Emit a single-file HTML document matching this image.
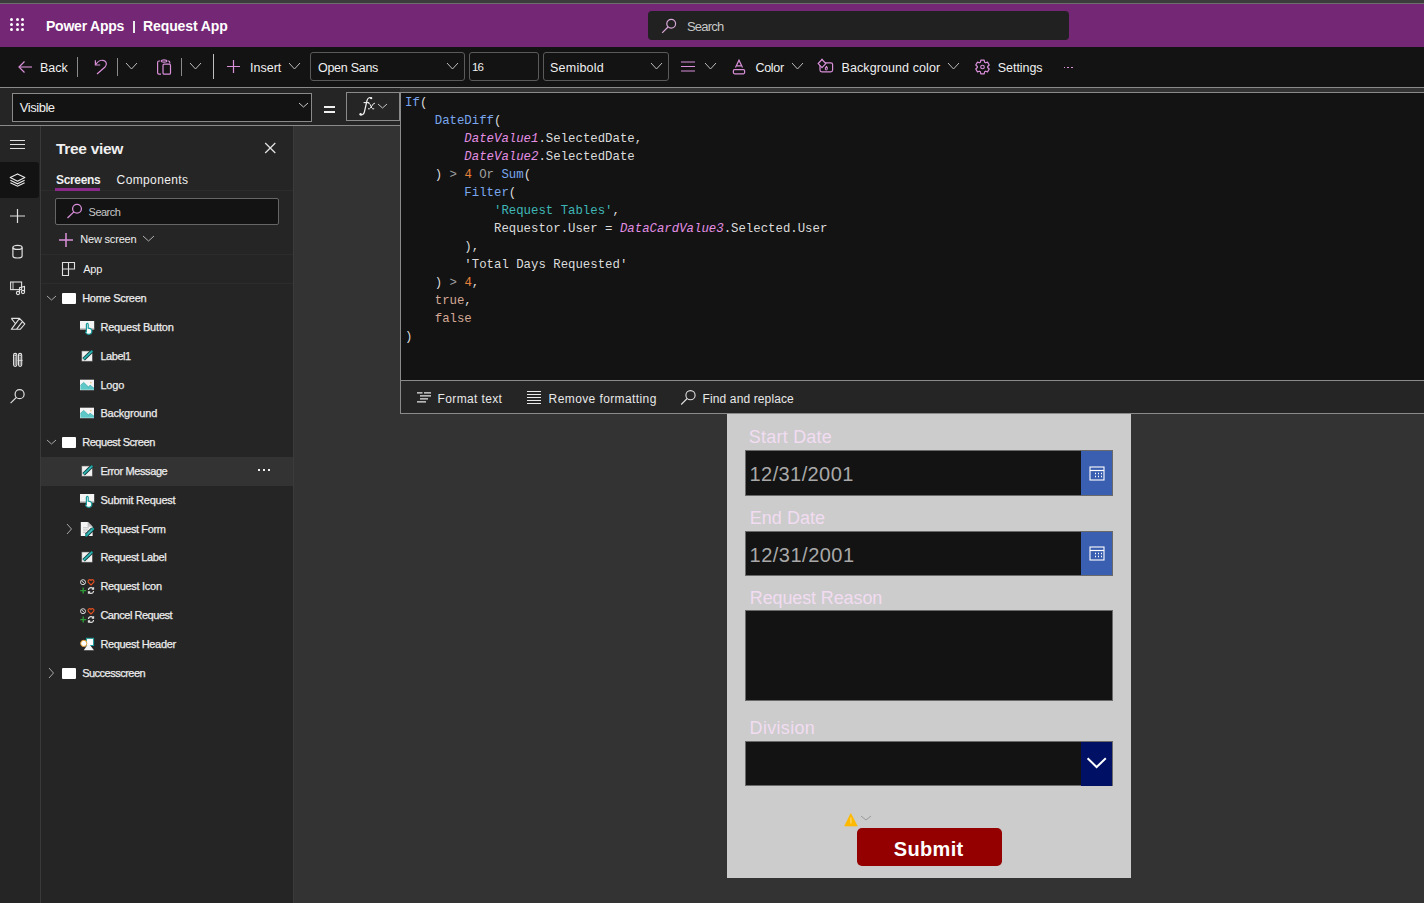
<!DOCTYPE html>
<html><head><meta charset="utf-8"><style>
html,body{margin:0;padding:0;width:1424px;height:903px;overflow:hidden;background:#333;}
.a{position:absolute;display:block;}
.t{position:absolute;white-space:pre;line-height:1;}
</style></head><body>
<div class="a" style="left:0px;top:0px;width:1424px;height:3px;background:#3c3c3c;"></div>
<div class="a" style="left:0px;top:3px;width:1424px;height:1px;background:#6b6e6b;"></div>
<div class="a" style="left:0px;top:4px;width:1424px;height:43px;background:#742774;"></div>
<div class="a" style="left:10.2px;top:17.8px;width:3px;height:3px;background:#ffffff;border-radius:1.5px;"></div>
<div class="a" style="left:10.2px;top:23.0px;width:3px;height:3px;background:#ffffff;border-radius:1.5px;"></div>
<div class="a" style="left:10.2px;top:28.200000000000003px;width:3px;height:3px;background:#ffffff;border-radius:1.5px;"></div>
<div class="a" style="left:15.6px;top:17.8px;width:3px;height:3px;background:#ffffff;border-radius:1.5px;"></div>
<div class="a" style="left:15.6px;top:23.0px;width:3px;height:3px;background:#ffffff;border-radius:1.5px;"></div>
<div class="a" style="left:15.6px;top:28.200000000000003px;width:3px;height:3px;background:#ffffff;border-radius:1.5px;"></div>
<div class="a" style="left:21.0px;top:17.8px;width:3px;height:3px;background:#ffffff;border-radius:1.5px;"></div>
<div class="a" style="left:21.0px;top:23.0px;width:3px;height:3px;background:#ffffff;border-radius:1.5px;"></div>
<div class="a" style="left:21.0px;top:28.200000000000003px;width:3px;height:3px;background:#ffffff;border-radius:1.5px;"></div>
<div class="t" id="t0" style="left:46.00px;top:19.16px;font-size:14px;color:#ffffff;font-weight:bold;font-family:'Liberation Sans', sans-serif;letter-spacing:-0.222px;">Power Apps</div>
<div class="a" style="left:133px;top:21px;width:2px;height:12px;background:#ececec;"></div>
<div class="t" id="t1" style="left:143.00px;top:19.16px;font-size:14px;color:#ffffff;font-weight:bold;font-family:'Liberation Sans', sans-serif;letter-spacing:-0.100px;">Request App</div>
<div class="a" style="left:648px;top:11px;width:421px;height:29px;background:#212121;border-radius:4px;"></div>
<svg class="a" style="left:660px;top:18px;" width="18" height="17" viewBox="0 0 18 17" fill="none"><circle cx="11.2" cy="5.8" r="4.4" stroke="#d8a8d8" stroke-width="1.2"/><line x1="8" y1="9" x2="2.2" y2="14.8" stroke="#d8a8d8" stroke-width="1.2"/></svg>
<div class="t" id="t2" style="left:687.00px;top:20.16px;font-size:13px;color:#c8c8c8;font-weight:normal;font-family:'Liberation Sans', sans-serif;letter-spacing:-0.800px;">Search</div>
<div class="a" style="left:0px;top:47px;width:1424px;height:40px;background:#131313;"></div>
<div class="a" style="left:0px;top:87px;width:1424px;height:1px;background:#8a8a8a;"></div>
<svg class="a" style="left:17px;top:60px;" width="16" height="14" viewBox="0 0 16 14" fill="none"><path d="M7.5 1.5 L2 7 L7.5 12.5" stroke="#d990d9" stroke-width="1.2"/><path d="M2.5 7 H15" stroke="#d990d9" stroke-width="1.3" opacity="0.85"/></svg>
<div class="t" id="t3" style="left:40.00px;top:62.15px;font-size:12.5px;color:#f0f0f0;font-weight:normal;font-family:'Liberation Sans', sans-serif;">Back</div>
<div class="a" style="left:77px;top:57px;width:1px;height:20px;background:#8a8a8a;"></div>
<svg class="a" style="left:93px;top:59px;" width="15" height="16" viewBox="0 0 15 16" fill="none"><path d="M2.4 1.2 V6 H7.2" stroke="#d990d9" stroke-width="1.2"/><path d="M2.6 5.8 C4.5 2.5 8 0.6 11 1.6 C13.8 2.6 14 5.8 12 8 L4 15" stroke="#d990d9" stroke-width="1.2"/></svg>
<div class="a" style="left:117px;top:58px;width:1px;height:18px;background:#8a8a8a;"></div>
<svg class="a" style="left:125px;top:62px;" width="13" height="9" viewBox="0 0 13 9" fill="none"><path d="M1 1 L6.5 7 L12 1" stroke="#bdbdbd" stroke-width="1.0"/></svg>
<svg class="a" style="left:156px;top:59px;" width="16" height="17" viewBox="0 0 16 17" fill="none"><rect x="7" y="5.2" width="7.5" height="10" rx="1.3" stroke="#d990d9" stroke-width="1.2"/><path d="M5 15.2 H3 Q1.6 15.2 1.6 13.8 V3.4 Q1.6 2 3 2 H4 M11.6 2 H12.4 Q13.8 2 13.8 3.4 V4.5" stroke="#d990d9" stroke-width="1.2"/><ellipse cx="8" cy="2" rx="2.8" ry="1.1" stroke="#d990d9" stroke-width="1.1"/></svg>
<div class="a" style="left:181px;top:58px;width:1px;height:18px;background:#8a8a8a;"></div>
<svg class="a" style="left:189px;top:62px;" width="13" height="9" viewBox="0 0 13 9" fill="none"><path d="M1 1 L6.5 7 L12 1" stroke="#bdbdbd" stroke-width="1.0"/></svg>
<div class="a" style="left:213px;top:54px;width:1px;height:25px;background:#c0c0c0;"></div>
<svg class="a" style="left:226px;top:59px;" width="15" height="15" viewBox="0 0 15 15" fill="none"><path d="M7.5 1 V14 M1 7.5 H14" stroke="#d990d9" stroke-width="1.2"/></svg>
<div class="t" id="t4" style="left:250.00px;top:62.15px;font-size:12.5px;color:#f0f0f0;font-weight:normal;font-family:'Liberation Sans', sans-serif;">Insert</div>
<svg class="a" style="left:288px;top:62px;" width="13" height="9" viewBox="0 0 13 9" fill="none"><path d="M1 1 L6.5 7 L12 1" stroke="#bdbdbd" stroke-width="1.0"/></svg>
<div class="a" style="left:310px;top:52px;width:155px;height:29px;background:#131313;border:1px solid #5a5a5a;box-sizing:border-box;border-radius:3px;"></div>
<div class="t" id="t5" style="left:318.00px;top:62.15px;font-size:12.5px;color:#f0f0f0;font-weight:normal;font-family:'Liberation Sans', sans-serif;letter-spacing:-0.275px;">Open Sans</div>
<svg class="a" style="left:446px;top:62px;" width="13" height="9" viewBox="0 0 13 9" fill="none"><path d="M1 1 L6.5 7 L12 1" stroke="#bdbdbd" stroke-width="1.0"/></svg>
<div class="a" style="left:469px;top:52px;width:70px;height:29px;background:#131313;border:1px solid #5a5a5a;box-sizing:border-box;border-radius:3px;"></div>
<div class="t" id="t6" style="left:472.00px;top:62.15px;font-size:11.5px;color:#f0f0f0;font-weight:normal;font-family:'Liberation Sans', sans-serif;letter-spacing:-1.000px;">16</div>
<div class="a" style="left:543px;top:52px;width:126px;height:29px;background:#131313;border:1px solid #5a5a5a;box-sizing:border-box;border-radius:3px;"></div>
<div class="t" id="t7" style="left:550.00px;top:62.15px;font-size:12.5px;color:#f0f0f0;font-weight:normal;font-family:'Liberation Sans', sans-serif;letter-spacing:0.229px;">Semibold</div>
<svg class="a" style="left:650px;top:62px;" width="13" height="9" viewBox="0 0 13 9" fill="none"><path d="M1 1 L6.5 7 L12 1" stroke="#bdbdbd" stroke-width="1.0"/></svg>
<svg class="a" style="left:680px;top:60px;" width="16" height="13" viewBox="0 0 16 13" fill="none"><path d="M1 2 H15 M1 6.5 H15 M1 11 H15" stroke="#d990d9" stroke-width="1.2"/></svg>
<svg class="a" style="left:704px;top:62px;" width="13" height="9" viewBox="0 0 13 9" fill="none"><path d="M1 1 L6.5 7 L12 1" stroke="#bdbdbd" stroke-width="1.0"/></svg>
<svg class="a" style="left:731px;top:58px;" width="16" height="17" viewBox="0 0 16 17" fill="none"><path d="M4.5 9.5 L8 2.2 L11.5 9.5 M6 7.8 H10" stroke="#d990d9" stroke-width="1.2"/><rect x="2.4" y="11.6" width="11.2" height="4.2" rx="1.2" stroke="#d990d9" stroke-width="1.2"/></svg>
<div class="t" id="t8" style="left:755.60px;top:62.15px;font-size:12.5px;color:#f0f0f0;font-weight:normal;font-family:'Liberation Sans', sans-serif;letter-spacing:-0.350px;">Color</div>
<svg class="a" style="left:791px;top:62px;" width="13" height="9" viewBox="0 0 13 9" fill="none"><path d="M1 1 L6.5 7 L12 1" stroke="#bdbdbd" stroke-width="1.0"/></svg>
<svg class="a" style="left:817px;top:58px;" width="18" height="16" viewBox="0 0 18 16" fill="none"><rect x="3" y="4.8" width="12.6" height="9" rx="1.8" stroke="#d990d9" stroke-width="1.2"/><path d="M5 1.5 L8.8 5.6 L5 9.6 L1.2 5.6 Z" stroke="#d990d9" stroke-width="1.2" fill="#131313"/><path d="M5 0.8 V2.5" stroke="#d990d9" stroke-width="1"/><path d="M9.5 8.5 Q11 10 10 11.5 Q9.2 12.6 8.4 11.5 Q7.8 10 9.5 8.5 Z" stroke="#d990d9" stroke-width="1.1"/></svg>
<div class="t" id="t9" style="left:841.60px;top:62.15px;font-size:12.5px;color:#f0f0f0;font-weight:normal;font-family:'Liberation Sans', sans-serif;letter-spacing:0.080px;">Background color</div>
<svg class="a" style="left:947px;top:62px;" width="13" height="9" viewBox="0 0 13 9" fill="none"><path d="M1 1 L6.5 7 L12 1" stroke="#bdbdbd" stroke-width="1.0"/></svg>
<svg class="a" style="left:973.5px;top:59px;" width="17" height="16" viewBox="0 0 17 16" fill="none"><path d="M6.81 1.21 L10.19 1.21 L10.62 3.25 L11.56 3.79 L13.54 3.14 L15.23 6.07 L13.67 7.46 L13.67 8.54 L15.23 9.93 L13.54 12.86 L11.56 12.21 L10.62 12.75 L10.19 14.79 L6.81 14.79 L6.38 12.75 L5.44 12.21 L3.46 12.86 L1.77 9.93 L3.33 8.54 L3.33 7.46 L1.77 6.07 L3.46 3.14 L5.44 3.79 L6.38 3.25 Z" stroke="#d990d9" stroke-width="1.2" stroke-linejoin="round"/><circle cx="8.5" cy="8" r="1.8" stroke="#d990d9" stroke-width="1.1"/></svg>
<div class="t" id="t10" style="left:997.80px;top:62.15px;font-size:12.5px;color:#f0f0f0;font-weight:normal;font-family:'Liberation Sans', sans-serif;letter-spacing:-0.057px;">Settings</div>
<div class="a" style="left:1063.5px;top:66.5px;width:1.6px;height:1.6px;background:#d990d9;"></div>
<div class="a" style="left:1067.3px;top:66.5px;width:1.6px;height:1.6px;background:#d990d9;"></div>
<div class="a" style="left:1071.1px;top:66.5px;width:1.6px;height:1.6px;background:#d990d9;"></div>
<div class="a" style="left:0px;top:88px;width:400px;height:37px;background:#252525;"></div>
<div class="a" style="left:0px;top:125px;width:400px;height:1px;background:#8a8a8a;"></div>
<div class="a" style="left:12px;top:93px;width:300px;height:29px;background:#131313;border:1px solid #8a8a8a;box-sizing:border-box;"></div>
<div class="t" id="t11" style="left:19.80px;top:101.16px;font-size:13px;color:#f0f0f0;font-weight:normal;font-family:'Liberation Sans', sans-serif;letter-spacing:-0.467px;">Visible</div>
<svg class="a" style="left:298px;top:102px;" width="11" height="7" viewBox="0 0 11 7" fill="none"><path d="M1 1 L5.5 5 L10 1" stroke="#c8c8c8" stroke-width="1.0"/></svg>
<div class="a" style="left:324px;top:106px;width:11px;height:1.5px;background:#f0f0f0;"></div>
<div class="a" style="left:324px;top:111px;width:11px;height:1.5px;background:#f0f0f0;"></div>
<div class="a" style="left:346px;top:92px;width:54px;height:29px;background:#252525;border:1px solid #8a8a8a;box-sizing:border-box;"></div>
<svg class="a" style="left:356px;top:95px;" width="22" height="22" viewBox="0 0 22 22" fill="none"><path d="M15.5 3.4 C14.2 1.8 11.8 2.4 11 5.5 L8.4 17 C7.8 19.6 6 20.4 4.2 19.4" stroke="#f0f0f0" stroke-width="1.2"/><circle cx="15.2" cy="3.2" r="1.1" fill="#f0f0f0"/><circle cx="4.6" cy="19.2" r="1.2" fill="#f0f0f0"/><path d="M7.6 7.6 H13.2" stroke="#f0f0f0" stroke-width="1.1"/><path d="M12.2 8.2 Q13.4 7.9 14 9.2 L15.8 13 Q16.4 14.2 18.2 13.8 M19 8.4 Q18 7.9 17.2 9 L14.4 13 Q13.6 14.2 12 13.8" stroke="#f0f0f0" stroke-width="1"/></svg>
<svg class="a" style="left:377px;top:103px;" width="11" height="7" viewBox="0 0 11 7" fill="none"><path d="M1 1 L5.5 5 L10 1" stroke="#c8c8c8" stroke-width="1.0"/></svg>
<div class="a" style="left:400px;top:92px;width:1025px;height:322px;background:#131313;border:1px solid #8a8a8a;box-sizing:border-box;"></div>
<div class="a" style="left:401px;top:380px;width:1023px;height:1px;background:#8a8a8a;"></div>
<div class="a" style="left:401px;top:381px;width:1023px;height:32px;background:#252525;"></div>
<div class="t" id="t12" style="left:405.10px;top:97.16px;font-size:12.35px;color:#dcdcdc;font-weight:normal;font-family:'Liberation Mono', monospace;"><span style="color:#7aa6ee;">If</span><span style="color:#dcdcdc;">(</span></div>
<div class="t" id="t13" style="left:405.10px;top:115.16px;font-size:12.35px;color:#dcdcdc;font-weight:normal;font-family:'Liberation Mono', monospace;"><span style="color:#7aa6ee;">    DateDiff</span><span style="color:#dcdcdc;">(</span></div>
<div class="t" id="t14" style="left:405.10px;top:133.16px;font-size:12.35px;color:#dcdcdc;font-weight:normal;font-family:'Liberation Mono', monospace;"><span style="color:#dcdcdc;">        </span><span style="color:#e48fe4;font-style:italic;">DateValue1</span><span style="color:#dcdcdc;">.SelectedDate,</span></div>
<div class="t" id="t15" style="left:405.10px;top:151.16px;font-size:12.35px;color:#dcdcdc;font-weight:normal;font-family:'Liberation Mono', monospace;"><span style="color:#dcdcdc;">        </span><span style="color:#e48fe4;font-style:italic;">DateValue2</span><span style="color:#dcdcdc;">.SelectedDate</span></div>
<div class="t" id="t16" style="left:405.10px;top:169.16px;font-size:12.35px;color:#dcdcdc;font-weight:normal;font-family:'Liberation Mono', monospace;"><span style="color:#dcdcdc;">    )</span><span style="color:#a0a0a0;"> &gt; </span><span style="color:#e8823a;">4</span><span style="color:#a0a0a0;"> Or </span><span style="color:#7aa6ee;">Sum</span><span style="color:#dcdcdc;">(</span></div>
<div class="t" id="t17" style="left:405.10px;top:187.16px;font-size:12.35px;color:#dcdcdc;font-weight:normal;font-family:'Liberation Mono', monospace;"><span style="color:#7aa6ee;">        Filter</span><span style="color:#dcdcdc;">(</span></div>
<div class="t" id="t18" style="left:405.10px;top:205.16px;font-size:12.35px;color:#dcdcdc;font-weight:normal;font-family:'Liberation Mono', monospace;"><span style="color:#dcdcdc;">            </span><span style="color:#3fb6b6;">'Request Tables'</span><span style="color:#dcdcdc;">,</span></div>
<div class="t" id="t19" style="left:405.10px;top:223.16px;font-size:12.35px;color:#dcdcdc;font-weight:normal;font-family:'Liberation Mono', monospace;"><span style="color:#dcdcdc;">            Requestor.User = </span><span style="color:#e48fe4;font-style:italic;">DataCardValue3</span><span style="color:#dcdcdc;">.Selected.User</span></div>
<div class="t" id="t20" style="left:405.10px;top:241.16px;font-size:12.35px;color:#dcdcdc;font-weight:normal;font-family:'Liberation Mono', monospace;"><span style="color:#dcdcdc;">        ),</span></div>
<div class="t" id="t21" style="left:405.10px;top:259.16px;font-size:12.35px;color:#dcdcdc;font-weight:normal;font-family:'Liberation Mono', monospace;"><span style="color:#dcdcdc;">        'Total Days Requested'</span></div>
<div class="t" id="t22" style="left:405.10px;top:277.16px;font-size:12.35px;color:#dcdcdc;font-weight:normal;font-family:'Liberation Mono', monospace;"><span style="color:#dcdcdc;">    )</span><span style="color:#a0a0a0;"> &gt; </span><span style="color:#e8823a;">4</span><span style="color:#dcdcdc;">,</span></div>
<div class="t" id="t23" style="left:405.10px;top:295.16px;font-size:12.35px;color:#dcdcdc;font-weight:normal;font-family:'Liberation Mono', monospace;"><span style="color:#d4a894;">    true</span><span style="color:#dcdcdc;">,</span></div>
<div class="t" id="t24" style="left:405.10px;top:313.16px;font-size:12.35px;color:#dcdcdc;font-weight:normal;font-family:'Liberation Mono', monospace;"><span style="color:#d4a894;">    false</span></div>
<div class="t" id="t25" style="left:405.10px;top:331.16px;font-size:12.35px;color:#dcdcdc;font-weight:normal;font-family:'Liberation Mono', monospace;"><span style="color:#dcdcdc;">)</span></div>
<svg class="a" style="left:416px;top:391px;" width="16" height="13" viewBox="0 0 16 13" fill="none"><path d="M1 1.8 H6.5 M8 1.8 H15 M4 4.8 H15 M4 7.8 H12 M1 10.8 H10" stroke="#e8e8e8" stroke-width="1.2"/></svg>
<div class="t" id="t26" style="left:437.60px;top:393.15px;font-size:12px;color:#e8e8e8;font-weight:normal;font-family:'Liberation Sans', sans-serif;letter-spacing:0.360px;">Format text</div>
<svg class="a" style="left:526px;top:390px;" width="16" height="15" viewBox="0 0 16 15" fill="none"><path d="M1 1.5 H15 M1 4.5 H15 M1 7.5 H15 M1 10.5 H15 M1 13.5 H15" stroke="#e8e8e8" stroke-width="1.1"/></svg>
<div class="t" id="t27" style="left:548.60px;top:393.15px;font-size:12px;color:#e8e8e8;font-weight:normal;font-family:'Liberation Sans', sans-serif;letter-spacing:0.400px;">Remove formatting</div>
<svg class="a" style="left:680px;top:389px;" width="17" height="17" viewBox="0 0 17 17" fill="none"><circle cx="10.5" cy="6.2" r="4.6" stroke="#e0e0e0" stroke-width="1.1"/><line x1="7.2" y1="9.5" x2="1.2" y2="15.5" stroke="#e0e0e0" stroke-width="1.1"/></svg>
<div class="t" id="t28" style="left:702.60px;top:393.15px;font-size:12px;color:#e8e8e8;font-weight:normal;font-family:'Liberation Sans', sans-serif;letter-spacing:0.120px;">Find and replace</div>
<div class="a" style="left:0px;top:126px;width:40px;height:777px;background:#252525;"></div>
<div class="a" style="left:40px;top:126px;width:1px;height:777px;background:#3a3a3a;"></div>
<div class="a" style="left:41px;top:126px;width:252px;height:777px;background:#252525;"></div>
<div class="a" style="left:293px;top:126px;width:1px;height:777px;background:#3b3b3b;"></div>
<div class="a" style="left:294px;top:126px;width:106px;height:287px;background:#333333;"></div>
<div class="a" style="left:294px;top:414px;width:1130px;height:489px;background:#333333;"></div>
<svg class="a" style="left:9px;top:139px;" width="17" height="11" viewBox="0 0 17 11" fill="none"><path d="M1 1.5 H16 M1 5.5 H16 M1 9.5 H16" stroke="#e0e0e0" stroke-width="1.1"/></svg>
<div class="a" style="left:0px;top:162px;width:38.5px;height:36px;background:#131313;border-radius:0 3px 3px 0;"></div>
<svg class="a" style="left:9px;top:171px;" width="17" height="17" viewBox="0 0 17 17" fill="none"><path d="M8.5 2.9 L15.8 6.6 L8.5 10.2 L1.2 6.6 Z" stroke="#ececec" stroke-width="1.1" stroke-linejoin="round"/><path d="M1.4 9.2 L8.5 12.8 L15.6 9.2 M1.4 11.8 L8.5 15.2 L15.6 11.8" stroke="#ececec" stroke-width="1.1"/></svg>
<svg class="a" style="left:9px;top:208px;" width="17" height="16" viewBox="0 0 17 16" fill="none"><path d="M8.5 1 V15 M1 8 H16" stroke="#e0e0e0" stroke-width="1.2"/></svg>
<svg class="a" style="left:11px;top:244px;" width="13" height="16" viewBox="0 0 13 16" fill="none"><ellipse cx="6.5" cy="3.4" rx="4.6" ry="2" stroke="#e0e0e0" stroke-width="1.2"/><path d="M1.9 3.4 V12 A4.6 2 0 0 0 11.1 12 V3.4" stroke="#e0e0e0" stroke-width="1.2"/></svg>
<svg class="a" style="left:9px;top:280px;" width="18" height="16" viewBox="0 0 18 16" fill="none"><rect x="1.6" y="2" width="11" height="7.6" stroke="#e0e0e0" stroke-width="1.1"/><path d="M4 2 V9.6" stroke="#e0e0e0" stroke-width="0.9"/><path d="M10.5 13 V7.8 L15.5 6.5 V12" stroke="#e0e0e0" stroke-width="1.1"/><circle cx="9" cy="13" r="1.6" stroke="#e0e0e0" stroke-width="1.1"/><circle cx="14" cy="12" r="1.6" stroke="#e0e0e0" stroke-width="1.1"/></svg>
<svg class="a" style="left:10px;top:316px;" width="16" height="16" viewBox="0 0 16 16" fill="none"><path d="M1.3 2.4 H9.5 L14.8 8 L10.2 13.3 H1.3 L9.5 2.4 M1.3 2.4 L5.3 7.5 M6.4 13.3 L12.4 5.6" stroke="#e0e0e0" stroke-width="1.1" stroke-linejoin="round"/></svg>
<svg class="a" style="left:12px;top:352px;" width="12" height="16" viewBox="0 0 12 16" fill="none"><rect x="1.6" y="1.4" width="3.2" height="13" rx="1.6" stroke="#e6e6e6" stroke-width="1.1"/><rect x="6.5" y="1.4" width="3.2" height="13" rx="1.6" stroke="#e6e6e6" stroke-width="1.1"/><circle cx="3.2" cy="3.4" r="0.8" fill="#e6e6e6"/><circle cx="8.1" cy="3.4" r="0.8" fill="#e6e6e6"/><path d="M3.2 4.5 V13 M8.1 4.5 V13 M5.6 8.4 H10.6" stroke="#e6e6e6" stroke-width="0.8"/></svg>
<svg class="a" style="left:9px;top:388px;" width="17" height="17" viewBox="0 0 17 17" fill="none"><circle cx="10.6" cy="6.2" r="4.5" stroke="#e0e0e0" stroke-width="1.2"/><line x1="7.4" y1="9.4" x2="1.6" y2="15.2" stroke="#e0e0e0" stroke-width="1.2"/></svg>
<div class="t" id="t29" style="left:56.00px;top:141.16px;font-size:15.5px;color:#f0f0f0;font-weight:bold;font-family:'Liberation Sans', sans-serif;letter-spacing:-0.300px;">Tree view</div>
<svg class="a" style="left:264px;top:142px;" width="13" height="12" viewBox="0 0 13 12" fill="none"><path d="M1.2 1 L11.3 11 M11.3 1 L1.2 11" stroke="#e0e0e0" stroke-width="1.3"/></svg>
<div class="t" id="t30" style="left:56.00px;top:174.15px;font-size:12px;color:#f0f0f0;font-weight:bold;font-family:'Liberation Sans', sans-serif;letter-spacing:-0.333px;">Screens</div>
<div class="t" id="t31" style="left:116.60px;top:174.15px;font-size:12px;color:#f0f0f0;font-weight:normal;font-family:'Liberation Sans', sans-serif;letter-spacing:0.378px;">Components</div>
<div class="a" style="left:41px;top:190px;width:252px;height:1px;background:#2c2c2c;"></div>
<div class="a" style="left:55px;top:188px;width:45px;height:2.5px;background:#8a2a8a;"></div>
<div class="a" style="left:55px;top:198px;width:224px;height:27px;background:#131313;border:1px solid #666;box-sizing:border-box;border-radius:2px;"></div>
<svg class="a" style="left:66px;top:203px;" width="17" height="16" viewBox="0 0 17 16" fill="none"><circle cx="11" cy="5.8" r="4.4" stroke="#d990d9" stroke-width="1.3"/><line x1="7.9" y1="8.9" x2="1.5" y2="15" stroke="#d990d9" stroke-width="1.3"/></svg>
<div class="t" id="t32" style="left:88.60px;top:207.15px;font-size:11px;color:#c8c8c8;font-weight:normal;font-family:'Liberation Sans', sans-serif;letter-spacing:-0.520px;">Search</div>
<svg class="a" style="left:58px;top:232px;" width="16" height="16" viewBox="0 0 16 16" fill="none"><path d="M8 1 V15 M1 8 H15" stroke="#d990d9" stroke-width="1.5"/></svg>
<div class="t" id="t33" style="left:80.20px;top:234.15px;font-size:11px;color:#f0f0f0;font-weight:normal;font-family:'Liberation Sans', sans-serif;letter-spacing:-0.178px;">New screen</div>
<svg class="a" style="left:142px;top:235px;" width="13" height="8" viewBox="0 0 13 8" fill="none"><path d="M1 1 L6.5 6 L12 1" stroke="#b0b0b0" stroke-width="1.0"/></svg>
<div class="a" style="left:41px;top:254px;width:252px;height:1px;background:#2c2c2c;"></div>
<svg class="a" style="left:61px;top:261px;" width="15" height="16" viewBox="0 0 15 16" fill="none"><path d="M1.5 1.5 H13.5 V8 H7.5 V14.5 H1.5 Z M7.5 1.5 V8 M1.5 8 H7.5" stroke="#e0e0e0" stroke-width="1.1"/></svg>
<div class="t" id="t34" style="left:83.20px;top:264.15px;font-size:11px;color:#f0f0f0;font-weight:normal;font-family:'Liberation Sans', sans-serif;letter-spacing:-0.200px;">App</div>
<div class="a" style="left:41px;top:283px;width:252px;height:1px;background:#2c2c2c;"></div>
<div class="a" style="left:41px;top:457px;width:252px;height:29px;background:#333333;"></div>
<div class="a" style="left:257.6px;top:469px;width:2px;height:2px;background:#f0f0f0;"></div>
<div class="a" style="left:263.0px;top:469px;width:2px;height:2px;background:#f0f0f0;"></div>
<div class="a" style="left:268.40000000000003px;top:469px;width:2px;height:2px;background:#f0f0f0;"></div>
<svg class="a" style="left:46px;top:295px;" width="11" height="7" viewBox="0 0 11 7" fill="none"><path d="M1 1 L5.5 5 L10 1" stroke="#a8a8a8" stroke-width="1.0"/></svg>
<div class="a" style="left:62px;top:293px;width:14px;height:11px;background:#ffffff;border-radius:1px;"></div>
<div class="t" id="t35" style="left:82.20px;top:293.15px;font-size:11px;color:#ececec;font-weight:normal;font-family:'Liberation Sans', sans-serif;letter-spacing:-0.280px;-webkit-text-stroke:0.25px #ececec;">Home Screen</div>
<svg class="a" style="left:80px;top:320px;" width="16" height="16" viewBox="0 0 16 16" fill="none"><rect x="0" y="1" width="14.2" height="8.4" fill="#f4f4f4"/><rect x="0" y="8.4" width="14.2" height="1.2" fill="#a8a8a8"/><path d="M6.4 11.5 V4.2 Q7.3 2.6 8.2 4.2 V8.2 Q11.6 8.4 11.9 10.8 Q11.9 14.3 9 14.3 Q6.3 14.3 5.6 12.4 Z" fill="#ffffff" stroke="#1a9a9a" stroke-width="1.2" stroke-linejoin="round"/></svg>
<div class="t" id="t36" style="left:100.40px;top:322.15px;font-size:11px;color:#ececec;font-weight:normal;font-family:'Liberation Sans', sans-serif;letter-spacing:-0.185px;-webkit-text-stroke:0.25px #ececec;">Request Button</div>
<svg class="a" style="left:81px;top:350px;" width="13" height="13" viewBox="0 0 13 13" fill="none"><rect x="0.8" y="1" width="10.5" height="10.2" fill="#f2f2f2" stroke="#5a5a5a" stroke-width="0.6"/><path d="M2.6 9.2 L11.4 0.8" stroke="#202020" stroke-width="3.6"/><path d="M2.6 9.2 L11.4 0.8" stroke="#169a9a" stroke-width="2.4"/><path d="M3.4 8.4 L10.6 1.6" stroke="#c8f0f0" stroke-width="0.6" stroke-dasharray="0.8 0.8"/></svg>
<div class="t" id="t37" style="left:100.40px;top:351.15px;font-size:11px;color:#ececec;font-weight:normal;font-family:'Liberation Sans', sans-serif;letter-spacing:-0.440px;-webkit-text-stroke:0.25px #ececec;">Label1</div>
<svg class="a" style="left:80px;top:379px;" width="15" height="12" viewBox="0 0 15 12" fill="none"><rect x="0" y="0.7" width="14" height="10.5" fill="#f4f4f4"/><path d="M0.4 10.8 V6.4 L3.7 3.4 L8.6 8 L10 6.2 L14 9.2 V10.8 Z" fill="#5ec8c8"/><path d="M0.4 6.4 L3.7 3.4 L9 8.6 M8.6 8 L10 6.2 L14 9.2" stroke="#3aa8a8" stroke-width="0.7"/><circle cx="10.8" cy="3.6" r="0.9" fill="#f8c890"/></svg>
<div class="t" id="t38" style="left:100.40px;top:380.15px;font-size:11px;color:#ececec;font-weight:normal;font-family:'Liberation Sans', sans-serif;letter-spacing:-0.200px;-webkit-text-stroke:0.25px #ececec;">Logo</div>
<svg class="a" style="left:80px;top:407px;" width="15" height="12" viewBox="0 0 15 12" fill="none"><rect x="0" y="0.7" width="14" height="10.5" fill="#f4f4f4"/><path d="M0.4 10.8 V6.4 L3.7 3.4 L8.6 8 L10 6.2 L14 9.2 V10.8 Z" fill="#5ec8c8"/><path d="M0.4 6.4 L3.7 3.4 L9 8.6 M8.6 8 L10 6.2 L14 9.2" stroke="#3aa8a8" stroke-width="0.7"/><circle cx="10.8" cy="3.6" r="0.9" fill="#f8c890"/></svg>
<div class="t" id="t39" style="left:100.40px;top:408.15px;font-size:11px;color:#ececec;font-weight:normal;font-family:'Liberation Sans', sans-serif;letter-spacing:-0.200px;-webkit-text-stroke:0.25px #ececec;">Background</div>
<svg class="a" style="left:46px;top:439px;" width="11" height="7" viewBox="0 0 11 7" fill="none"><path d="M1 1 L5.5 5 L10 1" stroke="#a8a8a8" stroke-width="1.0"/></svg>
<div class="a" style="left:62px;top:437px;width:14px;height:11px;background:#ffffff;border-radius:1px;"></div>
<div class="t" id="t40" style="left:82.20px;top:437.15px;font-size:11px;color:#ececec;font-weight:normal;font-family:'Liberation Sans', sans-serif;letter-spacing:-0.446px;-webkit-text-stroke:0.25px #ececec;">Request Screen</div>
<svg class="a" style="left:81px;top:465px;" width="13" height="13" viewBox="0 0 13 13" fill="none"><rect x="0.8" y="1" width="10.5" height="10.2" fill="#f2f2f2" stroke="#5a5a5a" stroke-width="0.6"/><path d="M2.6 9.2 L11.4 0.8" stroke="#202020" stroke-width="3.6"/><path d="M2.6 9.2 L11.4 0.8" stroke="#169a9a" stroke-width="2.4"/><path d="M3.4 8.4 L10.6 1.6" stroke="#c8f0f0" stroke-width="0.6" stroke-dasharray="0.8 0.8"/></svg>
<div class="t" id="t41" style="left:100.40px;top:466.15px;font-size:11px;color:#ececec;font-weight:normal;font-family:'Liberation Sans', sans-serif;letter-spacing:-0.400px;-webkit-text-stroke:0.25px #ececec;">Error Message</div>
<svg class="a" style="left:80px;top:493px;" width="16" height="16" viewBox="0 0 16 16" fill="none"><rect x="0" y="1" width="14.2" height="8.4" fill="#f4f4f4"/><rect x="0" y="8.4" width="14.2" height="1.2" fill="#a8a8a8"/><path d="M6.4 11.5 V4.2 Q7.3 2.6 8.2 4.2 V8.2 Q11.6 8.4 11.9 10.8 Q11.9 14.3 9 14.3 Q6.3 14.3 5.6 12.4 Z" fill="#ffffff" stroke="#1a9a9a" stroke-width="1.2" stroke-linejoin="round"/></svg>
<div class="t" id="t42" style="left:100.40px;top:495.15px;font-size:11px;color:#ececec;font-weight:normal;font-family:'Liberation Sans', sans-serif;letter-spacing:-0.231px;-webkit-text-stroke:0.25px #ececec;">Submit Request</div>
<svg class="a" style="left:66px;top:523px;" width="7" height="12" viewBox="0 0 7 12" fill="none"><path d="M1 1 L5.5 6 L1 11" stroke="#a8a8a8" stroke-width="1"/></svg>
<svg class="a" style="left:80px;top:522px;" width="16" height="16" viewBox="0 0 16 16" fill="none"><path d="M0.8 -0.3 H7.6 L12.6 4.7 V14.1 H0.8 Z" fill="#f6f6f6"/><path d="M7.6 -0.3 V4.7 H12.6 Z" fill="#c0c0c0"/><path d="M3 5.8 H9 M3 8 H8 M3 10.2 H6" stroke="#b0b0b0" stroke-width="0.8"/><path d="M6.4 13.2 L12.8 7" stroke="#202020" stroke-width="4"/><path d="M6.4 13.2 L12.8 7" stroke="#1a9c9c" stroke-width="2.8" stroke-linecap="round"/><path d="M7.4 12.2 L12 7.8" stroke="#90e0e0" stroke-width="0.7"/></svg>
<div class="t" id="t43" style="left:100.40px;top:524.15px;font-size:11px;color:#ececec;font-weight:normal;font-family:'Liberation Sans', sans-serif;letter-spacing:-0.382px;-webkit-text-stroke:0.25px #ececec;">Request Form</div>
<svg class="a" style="left:81px;top:551px;" width="13" height="13" viewBox="0 0 13 13" fill="none"><rect x="0.8" y="1" width="10.5" height="10.2" fill="#f2f2f2" stroke="#5a5a5a" stroke-width="0.6"/><path d="M2.6 9.2 L11.4 0.8" stroke="#202020" stroke-width="3.6"/><path d="M2.6 9.2 L11.4 0.8" stroke="#169a9a" stroke-width="2.4"/><path d="M3.4 8.4 L10.6 1.6" stroke="#c8f0f0" stroke-width="0.6" stroke-dasharray="0.8 0.8"/></svg>
<div class="t" id="t44" style="left:100.40px;top:552.15px;font-size:11px;color:#ececec;font-weight:normal;font-family:'Liberation Sans', sans-serif;letter-spacing:-0.383px;-webkit-text-stroke:0.25px #ececec;">Request Label</div>
<svg class="a" style="left:80px;top:579px;" width="15" height="16" viewBox="0 0 15 16" fill="none"><circle cx="3" cy="3.2" r="2.5" stroke="#d4d4d4" stroke-width="1"/><path d="M1.4 1.6 L4.6 4.8" stroke="#d4d4d4" stroke-width="1"/><path d="M11 6 L8.4 3.4 Q7.6 2 8.8 0.9 Q10 0.2 11 1.4 Q12 0.2 13.2 0.9 Q14.4 2 13.6 3.4 Z" stroke="#e8501e" stroke-width="1.1" stroke-linejoin="round"/><path d="M3.2 8.6 V14.6 M0.2 11.6 H6.2" stroke="#2e9a38" stroke-width="1.4"/><path d="M8.4 11 Q8.8 8.6 11 8.6 Q12.4 8.6 13.2 9.6 M13.6 8.2 V10.2 H11.8 M13.6 12 Q13.2 14.4 11 14.4 Q9.6 14.4 8.8 13.4 M8.4 14.8 V12.8 H10.2" stroke="#e0e0e0" stroke-width="1.1"/></svg>
<div class="t" id="t45" style="left:100.40px;top:581.15px;font-size:11px;color:#ececec;font-weight:normal;font-family:'Liberation Sans', sans-serif;letter-spacing:-0.291px;-webkit-text-stroke:0.25px #ececec;">Request Icon</div>
<svg class="a" style="left:80px;top:608px;" width="15" height="16" viewBox="0 0 15 16" fill="none"><circle cx="3" cy="3.2" r="2.5" stroke="#d4d4d4" stroke-width="1"/><path d="M1.4 1.6 L4.6 4.8" stroke="#d4d4d4" stroke-width="1"/><path d="M11 6 L8.4 3.4 Q7.6 2 8.8 0.9 Q10 0.2 11 1.4 Q12 0.2 13.2 0.9 Q14.4 2 13.6 3.4 Z" stroke="#e8501e" stroke-width="1.1" stroke-linejoin="round"/><path d="M3.2 8.6 V14.6 M0.2 11.6 H6.2" stroke="#2e9a38" stroke-width="1.4"/><path d="M8.4 11 Q8.8 8.6 11 8.6 Q12.4 8.6 13.2 9.6 M13.6 8.2 V10.2 H11.8 M13.6 12 Q13.2 14.4 11 14.4 Q9.6 14.4 8.8 13.4 M8.4 14.8 V12.8 H10.2" stroke="#e0e0e0" stroke-width="1.1"/></svg>
<div class="t" id="t46" style="left:100.40px;top:610.15px;font-size:11px;color:#ececec;font-weight:normal;font-family:'Liberation Sans', sans-serif;letter-spacing:-0.462px;-webkit-text-stroke:0.25px #ececec;">Cancel Request</div>
<svg class="a" style="left:80px;top:637px;" width="16" height="16" viewBox="0 0 16 16" fill="none"><rect x="6.4" y="1.3" width="7.2" height="7.2" fill="#ffffff" stroke="#1a9a9a" stroke-width="1"/><path d="M3.8 13.3 L8.6 6.2 L14 13.3 Z" fill="#f4f4f4"/><circle cx="3.8" cy="6.4" r="3.1" fill="#ffffff" stroke="#e8a030" stroke-width="1"/></svg>
<div class="t" id="t47" style="left:100.40px;top:639.15px;font-size:11px;color:#ececec;font-weight:normal;font-family:'Liberation Sans', sans-serif;letter-spacing:-0.338px;-webkit-text-stroke:0.25px #ececec;">Request Header</div>
<svg class="a" style="left:48px;top:667px;" width="7" height="12" viewBox="0 0 7 12" fill="none"><path d="M1 1 L5.5 6 L1 11" stroke="#a8a8a8" stroke-width="1"/></svg>
<div class="a" style="left:62px;top:668px;width:14px;height:11px;background:#ffffff;border-radius:1px;"></div>
<div class="t" id="t48" style="left:82.20px;top:668.15px;font-size:11px;color:#ececec;font-weight:normal;font-family:'Liberation Sans', sans-serif;letter-spacing:-0.509px;-webkit-text-stroke:0.25px #ececec;">Successcreen</div>
<div class="a" style="left:727px;top:414px;width:404px;height:464px;background:#cccccc;"></div>
<div class="t" id="t49" style="left:748.80px;top:428.15px;font-size:18px;color:#f2dcf2;font-weight:normal;font-family:'Liberation Sans', sans-serif;letter-spacing:0.222px;">Start Date</div>
<div class="a" style="left:745px;top:450px;width:368px;height:46px;background:#131313;border:1px solid #6a6a6a;box-sizing:border-box;"></div>
<div class="a" style="left:1081px;top:451px;width:31px;height:44px;background:#3a5eb0;"></div>
<div class="t" id="t50" style="left:749.60px;top:464.16px;font-size:20px;color:#a8a8a8;font-weight:normal;font-family:'Liberation Sans', sans-serif;letter-spacing:0.400px;">12/31/2001</div>
<svg class="a" style="left:1088.5px;top:466px;" width="16" height="15" viewBox="0 0 16 15" fill="none"><rect x="1" y="1" width="14" height="13" stroke="#fff" stroke-width="1.1"/><path d="M1 4.5 H15" stroke="#fff" stroke-width="1.2"/><path d="M6 7.5 H7 M9 7.5 H10 M12 7.5 H13 M6 10.5 H7 M9 10.5 H10 M12 10.5 H13" stroke="#fff" stroke-width="1.3"/></svg>
<div class="t" id="t51" style="left:749.80px;top:509.15px;font-size:18px;color:#f2dcf2;font-weight:normal;font-family:'Liberation Sans', sans-serif;letter-spacing:0.029px;">End Date</div>
<div class="a" style="left:745px;top:531px;width:368px;height:45px;background:#131313;border:1px solid #6a6a6a;box-sizing:border-box;"></div>
<div class="a" style="left:1081px;top:532px;width:31px;height:43px;background:#3a5eb0;"></div>
<div class="t" id="t52" style="left:749.60px;top:545.16px;font-size:20px;color:#a8a8a8;font-weight:normal;font-family:'Liberation Sans', sans-serif;letter-spacing:0.489px;">12/31/2001</div>
<svg class="a" style="left:1088.5px;top:546px;" width="16" height="15" viewBox="0 0 16 15" fill="none"><rect x="1" y="1" width="14" height="13" stroke="#fff" stroke-width="1.1"/><path d="M1 4.5 H15" stroke="#fff" stroke-width="1.2"/><path d="M6 7.5 H7 M9 7.5 H10 M12 7.5 H13 M6 10.5 H7 M9 10.5 H10 M12 10.5 H13" stroke="#fff" stroke-width="1.3"/></svg>
<div class="t" id="t53" style="left:749.80px;top:589.15px;font-size:18px;color:#f2dcf2;font-weight:normal;font-family:'Liberation Sans', sans-serif;letter-spacing:-0.123px;">Request Reason</div>
<div class="a" style="left:745px;top:610px;width:368px;height:91px;background:#131313;border:1px solid #6a6a6a;box-sizing:border-box;"></div>
<div class="t" id="t54" style="left:749.60px;top:719.15px;font-size:18px;color:#f2dcf2;font-weight:normal;font-family:'Liberation Sans', sans-serif;letter-spacing:0.314px;">Division</div>
<div class="a" style="left:745px;top:741px;width:368px;height:45px;background:#131313;border:1px solid #6a6a6a;box-sizing:border-box;"></div>
<div class="a" style="left:1081px;top:741.5px;width:31px;height:44px;background:#001064;"></div>
<svg class="a" style="left:1085px;top:754px;" width="24" height="17" viewBox="0 0 24 17" fill="none"><path d="M2.6 4.3 L11.6 13 L20.8 4.3" stroke="#fff" stroke-width="2"/></svg>
<svg class="a" style="left:843px;top:812px;" width="16" height="16" viewBox="0 0 16 16" fill="none"><path d="M7.8 1.6 L14.3 14 H1.6 Z" fill="#ffb900" stroke="#ffb900" stroke-width="0.6" stroke-linejoin="round"/><path d="M7.9 5.5 V11.5" stroke="#ffd870" stroke-width="1.2"/></svg>
<svg class="a" style="left:860px;top:815px;" width="12" height="7" viewBox="0 0 12 7" fill="none"><path d="M1 1 L6.0 5 L11 1" stroke="#9a9a9a" stroke-width="1.0"/></svg>
<div class="a" style="left:857px;top:828.3px;width:144.5px;height:38px;background:#940000;border-radius:5px;"></div>
<div class="t" id="t55" style="left:893.80px;top:839.16px;font-size:20px;color:#ffffff;font-weight:bold;font-family:'Liberation Sans', sans-serif;letter-spacing:0.320px;">Submit</div>
</body></html>
